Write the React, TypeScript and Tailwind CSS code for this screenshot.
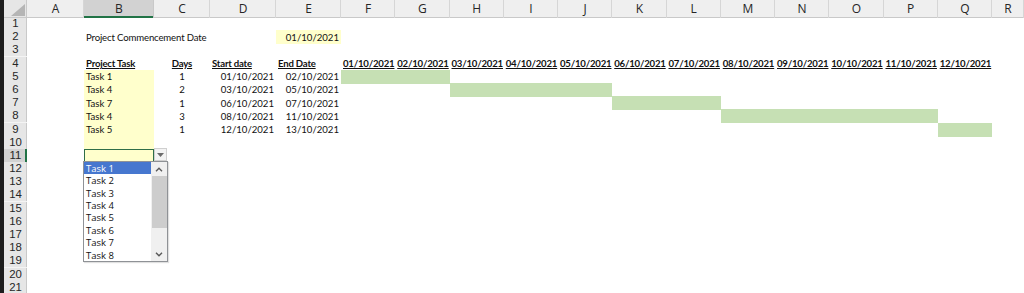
import type { ReactNode } from 'react';

const GRID = 'grid grid-cols-[23px_57px_70px_56px_66px_65px_repeat(12,54.25px)_1fr]';
const LETTERS = ['A', 'B', 'C', 'D', 'E', 'F', 'G', 'H', 'I', 'J', 'K', 'L', 'M', 'N', 'O', 'P', 'Q', 'R'];
const DATES = [
  '01/10/2021', '02/10/2021', '03/10/2021', '04/10/2021', '05/10/2021', '06/10/2021',
  '07/10/2021', '08/10/2021', '09/10/2021', '10/10/2021', '11/10/2021', '12/10/2021',
];

const TASKS = [
  { name: 'Task 1', days: 1, start: '01/10/2021', end: '02/10/2021', from: 0, to: 1 },
  { name: 'Task 4', days: 2, start: '03/10/2021', end: '05/10/2021', from: 2, to: 4 },
  { name: 'Task 7', days: 1, start: '06/10/2021', end: '07/10/2021', from: 5, to: 6 },
  { name: 'Task 4', days: 3, start: '08/10/2021', end: '11/10/2021', from: 7, to: 10 },
  { name: 'Task 5', days: 1, start: '12/10/2021', end: '13/10/2021', from: 11, to: 11 },
];

const LIST = ['Task 1', 'Task 2', 'Task 3', 'Task 4', 'Task 5', 'Task 6', 'Task 7', 'Task 8'];

function Cell({ className = '', children }: { className?: string; children?: ReactNode }) {
  return (
    <div className={`flex items-end px-[2px] pb-[0.5px] whitespace-nowrap leading-[12px] ${className}`}>
      {children}
    </div>
  );
}

function Row({ n, active = false, children }: { n: number; active?: boolean; children?: ReactNode }) {
  return (
    <div className={`${GRID} h-[13.2px]`}>
      <div
        className={`flex items-center justify-center border-b border-[#f4f4f4] font-['Liberation_Sans',sans-serif] text-[11.4px] leading-[13px] text-[#262626] ${
          active ? 'bg-[#d2d2d2] shadow-[inset_-2px_0_0_#217346]' : 'bg-[#e6e6e6] shadow-[inset_-1px_0_0_#c9c9c9]'
        }`}
      >
        {n}
      </div>
      {children}
    </div>
  );
}

function Chevron({ up }: { up?: boolean }) {
  return (
    <svg width="8" height="5" viewBox="0 0 8 5" className={up ? '' : 'rotate-180'}>
      <path d="M1 4.2 L4 1.2 L7 4.2" fill="none" stroke="#5a5a5a" strokeWidth="1.4" />
    </svg>
  );
}

export default function App() {
  return (
    <div className="relative flex h-[293px] w-[1024px] overflow-hidden bg-white font-['Lato',sans-serif] text-[9.6px] text-[#111]">
      <div className="w-[4px] shrink-0 bg-[#1d1d1d]" />

      <div className="flex flex-1 flex-col">
        {/* column headers */}
        <div className={`${GRID} h-[17px] font-['Open_Sans',sans-serif] text-[12px] text-[#262626]`}>
          <div className="relative bg-[#e6e6e6] shadow-[inset_-1px_-1px_0_#c9c9c9]">
            <svg className="absolute bottom-[2px] right-[2px]" width="14" height="12" viewBox="0 0 14 12">
              <polygon points="14,0 14,12 0,12" fill="#b5b5b5" />
            </svg>
          </div>
          {LETTERS.map((l) => (
            <div
              key={l}
              className={`flex items-center justify-center ${
                l === 'B'
                  ? 'bg-[#d2d2d2] shadow-[inset_-1px_0_0_#c9c9c9,inset_0_-2px_0_#217346]'
                  : 'bg-[#efefef] shadow-[inset_-1px_0_0_#d6d6d6,inset_0_-1px_0_#c9c9c9]'
              }`}
            >
              {l}
            </div>
          ))}
        </div>

        <Row n={1} />
        <Row n={2}>
          <Cell />
          <Cell className="tracking-[-0.15px]">Project Commencement Date</Cell>
          <Cell />
          <Cell />
          <Cell className="justify-end bg-[#ffffcc]">01/10/2021</Cell>
        </Row>
        <Row n={3} />
        <Row n={4}>
          <Cell />
          <Cell className="font-bold tracking-[-0.2px] underline">Project Task</Cell>
          <Cell className="justify-center font-bold tracking-[-0.2px] underline">Days</Cell>
          <Cell className="font-bold tracking-[-0.2px] underline">Start date</Cell>
          <Cell className="font-bold tracking-[-0.2px] underline">End Date</Cell>
          {DATES.map((d) => (
            <Cell key={d} className="font-bold tracking-[-0.2px] underline">
              {d}
            </Cell>
          ))}
        </Row>
        {TASKS.map((t, i) => (
          <Row key={i} n={5 + i}>
            <Cell />
            <Cell className="bg-[#ffffcc]">{t.name}</Cell>
            <Cell className="justify-center">{t.days}</Cell>
            <Cell className="justify-end">{t.start}</Cell>
            <Cell className="justify-end">{t.end}</Cell>
            {DATES.map((d, j) => (
              <div key={d} className={j >= t.from && j <= t.to ? 'bg-[#c6e0b4]' : ''} />
            ))}
          </Row>
        ))}
        <Row n={10}>
          <Cell />
          <Cell className="bg-[#ffffcc]" />
        </Row>
        <Row n={11} active>
          <Cell />
          <Cell className="relative bg-[#ffffcc] shadow-[inset_0_0_0_1px_#2f6e48]">
            <span className="absolute -bottom-[1px] -right-[1px] h-[3px] w-[3px] bg-[#217346]" />
          </Cell>
        </Row>
        {Array.from({ length: 10 }, (_, i) => (
          <Row key={i} n={12 + i} />
        ))}
      </div>

      {/* data validation arrow */}
      <div className="absolute left-[154px] top-[148px] flex h-[13px] w-[13px] items-center justify-center border border-[#cfcfcf] bg-[#f3f3f3]">
        <svg width="7" height="4" viewBox="0 0 7 4">
          <polygon points="0,0 7,0 3.5,4" fill="#6b6b6b" />
        </svg>
      </div>

      {/* dropdown list */}
      <div className="absolute left-[83px] top-[161px] flex h-[101px] w-[85px] border border-[#8f9296] bg-white font-['Open_Sans',sans-serif] text-[9.5px] shadow-[1px_1px_1px_rgba(0,0,0,0.12)]">
        <div className="flex flex-1 flex-col">
          {LIST.map((item, i) => (
            <div
              key={item}
              className={`flex h-[12.4px] items-center pl-[2px] pt-[1px] leading-none ${
                i === 0 ? 'bg-[#4677cf] text-white' : 'text-[#111]'
              }`}
            >
              {item}
            </div>
          ))}
        </div>
        <div className="flex w-[16px] flex-col bg-[#f0f0f0]">
          <div className="flex h-[14px] items-center justify-center">
            <Chevron up />
          </div>
          <div className="mx-[0.5px] h-[52px] bg-[#cdcdcd]" />
          <div className="flex-1" />
          <div className="flex h-[14px] items-center justify-center">
            <Chevron />
          </div>
        </div>
      </div>
    </div>
  );
}
